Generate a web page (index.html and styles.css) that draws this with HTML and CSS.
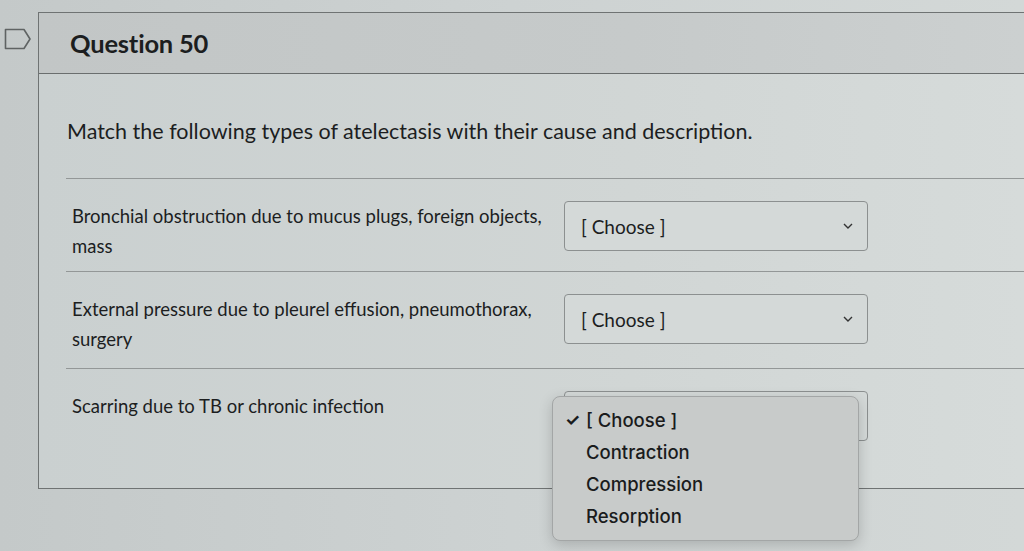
FILE: index.html
```html
<!DOCTYPE html>
<html>
<head>
<meta charset="utf-8">
<link rel="stylesheet" href="styles.css">
</head>
<body>
<div class="page">
  <div class="gutter">
    <svg class="bookmark" width="28" height="22" viewBox="0 0 28 22">
      <path d="M1.5 1.5 H20 L26 11 L20 20.5 H1.5 Z" fill="none" stroke="#5f6363" stroke-width="1.6" stroke-linejoin="round"/>
    </svg>
  </div>
  <div class="card">
    <div class="card-header">
      <h2 class="title">Question 50</h2>
    </div>
    <div class="card-body">
      <p class="prompt">Match the following types of atelectasis with their cause and description.</p>
      <div class="matches">
        <div class="row first">
          <div class="desc">Bronchial obstruction due to mucus plugs, foreign objects, mass</div>
          <div class="select"><span>[ Choose ]</span><svg class="chev" width="10" height="6" viewBox="0 0 10 6"><path d="M1 1 L5 5 L9 1" fill="none" stroke="#333" stroke-width="1.4"/></svg></div>
        </div>
        <div class="row second">
          <div class="desc">External pressure due to pleurel effusion, pneumothorax, surgery</div>
          <div class="select"><span>[ Choose ]</span><svg class="chev" width="10" height="6" viewBox="0 0 10 6"><path d="M1 1 L5 5 L9 1" fill="none" stroke="#333" stroke-width="1.4"/></svg></div>
        </div>
        <div class="row last">
          <div class="desc">Scarring due to TB or chronic infection</div>
          <div class="select open"><span class="value">[ Choose ]</span><svg class="chev" width="10" height="6" viewBox="0 0 10 6"><path d="M1 1 L5 5 L9 1" fill="none" stroke="#333" stroke-width="1.4"/></svg>
            <ul class="menu">
              <li class="item selected"><span class="check">✓</span>[ Choose ]</li>
              <li class="item">Contraction</li>
              <li class="item">Compression</li>
              <li class="item">Resorption</li>
            </ul>
          </div>
        </div>
      </div>
    </div>
  </div>
</div>
</body>
</html>
```
FILE: styles.css
```css
html, body {
  margin: 0;
  padding: 0;
}
body {
  width: 1024px;
  height: 551px;
  overflow: hidden;
  background: linear-gradient(90deg, #c4c9c9 0%, #cdd2d2 50%, #d3d8d7 100%);
  font-family: Lato, "Open Sans", sans-serif;
  color: #1c1e1f;
}
.page {
  display: flex;
  align-items: flex-start;
}
.gutter {
  width: 38px;
  flex: none;
  padding-top: 28px;
  padding-left: 4px;
  box-sizing: border-box;
}
.bookmark {
  display: block;
}
.card {
  flex: 1;
  margin-top: 12px;
  border-top: 1px solid #6f7373;
  border-left: 1px solid #6f7373;
  border-bottom: 1px solid #6f7373;
  background: linear-gradient(90deg, #cad0d0 0%, #d1d6d5 60%, #d6dbda 100%);
}
.card-header {
  height: 60px;
  display: flex;
  align-items: center;
  padding-left: 31px;
  background: linear-gradient(90deg, #c2c6c6 0%, #c6caca 60%, #ccd0d0 100%);
  border-bottom: 1px solid #6a6e6e;
}
.title {
  margin: 0;
  font-size: 25.5px;
  font-weight: 700;
  letter-spacing: -0.2px;
}
.card-body {
  padding-top: 44px;
}
.prompt {
  margin: 0 0 0 28px;
  font-size: 21.5px;
  line-height: 26px;
}
.matches {
  margin-top: 34px;
  margin-left: 27px;
}
.row {
  display: grid;
  grid-template-columns: 498px 304px;
  align-items: start;
  box-sizing: border-box;
  border-top: 1px solid #939797;
  padding-top: 22px;
}
.row.first {
  height: 93px;
}
.row.second {
  height: 97px;
}
.row.last {
  height: 120px;
}
.desc {
  padding-left: 6px;
  padding-right: 10px;
  font-size: 18.5px;
  line-height: 30px;
  margin-top: 0;
}
.select {
  position: relative;
  height: 50px;
  box-sizing: border-box;
  border: 1px solid #8c9090;
  border-radius: 4px;
  background: #d4d9d8;
  display: flex;
  align-items: center;
  justify-content: space-between;
  padding: 0 14px 0 16px;
  font-size: 19px;
}
.select.open .value {
  visibility: hidden;
}
.chev {
  display: block;
}
.menu {
  position: absolute;
  left: -13px;
  top: 4px;
  width: 307px;
  margin: 0;
  padding: 7px 0 8px;
  list-style: none;
  box-sizing: border-box;
  background: #c8cbca;
  border: 1px solid #a3a6a6;
  border-radius: 8px;
  box-shadow: 0 4px 14px rgba(0, 0, 0, 0.18);
  font-family: Inter, "Liberation Sans", sans-serif;
  font-size: 18.5px;
  font-weight: 500;
  color: #1a1b1c;
}
.item {
  position: relative;
  height: 32px;
  line-height: 32px;
  padding-left: 33px;
}
.check {
  position: absolute;
  left: 12px;
  top: 0;
  font-size: 17px;
  font-weight: 700;
}
```
